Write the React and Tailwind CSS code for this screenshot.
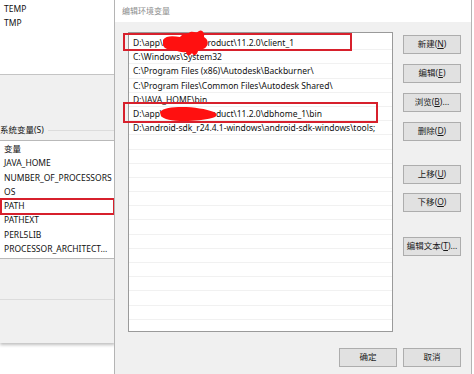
import React from 'react'

const userVars = ['TEMP', 'TMP']
const sysVars = ['变量', 'JAVA_HOME', 'NUMBER_OF_PROCESSORS', 'OS', 'PATH', 'PATHEXT', 'PERL5LIB', 'PROCESSOR_ARCHITECT...']
const paths = [
  'D:\\app\\xxxxxxxx\\product\\11.2.0\\client_1',
  'C:\\Windows\\System32',
  'C:\\Program Files (x86)\\Autodesk\\Backburner\\',
  'C:\\Program Files\\Common Files\\Autodesk Shared\\',
  'D:\\JAVA_HOME\\bin',
  'D:\\app\\xxxxxxxx\\product\\11.2.0\\dbhome_1\\bin',
  'D:\\android-sdk_r24.4.1-windows\\android-sdk-windows\\tools;',
]

function Btn({ label, u, rest }) {
  return (
    <div className="h-[19px] w-[58px] bg-[#e1e1e1] border border-[#adadad] flex items-center justify-center text-[8.5px] text-[#1a1a1a] leading-none">
      {label}
      {u !== undefined && (
        <span>
          (<span className="underline">{u}</span>){rest}
        </span>
      )}
    </div>
  )
}

function LeftWindow() {
  return (
    <div className="absolute left-0 top-0 w-[115px] h-[343px] flex flex-col bg-[#f0f0f0] shadow-[0_2px_3px_rgba(0,0,0,0.25)]">
      <div className="h-[75px] bg-white border-b border-[#c4c4c4] pt-[2px] pl-[4px]">
        {userVars.map(v => (
          <div key={v} className="h-[14px] leading-[14px]">{v}</div>
        ))}
      </div>
      <div className="h-[45px]" />
      <div className="h-[20px] flex items-center">
        <span className="whitespace-nowrap">系统变量(S)</span>
        <div className="flex-1 h-px bg-[#dcdcdc] ml-1" />
      </div>
      <div className="h-[119px] bg-white border-y border-[#b9b9b9] pl-[4px] pt-[1px]">
        {sysVars.map(v => (
          <div key={v} className="relative h-[14.3px] leading-[14.3px] whitespace-nowrap">
            {v}
            {v === 'PATH' && (
              <span className="absolute -left-[4px] right-0 -top-[1px] -bottom-[2px] border-2 border-[#d7202c]" />
            )}
          </div>
        ))}
      </div>
      <div className="h-[41px] border-b border-[#dcdcdc]" />
      <div className="flex-1" />
    </div>
  )
}

function Dialog() {
  const rows = Array.from({ length: 22 }, (_, i) => paths[i] || '')
  return (
    <div className="absolute left-[114px] top-0 w-[358px] h-[380px] flex flex-col bg-[#f0f0f0] border-x border-[#b4b4b4]">
      <div className="h-[22px] bg-white flex items-center pl-[7px] text-[8px] text-[#8c8c8c]">编辑环境变量</div>
      <div className="flex gap-[10px] pl-[13px] pt-[10px]">
        <div className="w-[265px] h-[300px] bg-white border border-[#9a9a9a] pt-[3px] overflow-hidden">
          {rows.map((p, i) => (
            <div key={i} className="h-[14.2px] leading-[14px] pl-[4px] border-b border-[#f1f1f1] whitespace-nowrap">{p}</div>
          ))}
        </div>
        <div className="flex flex-col pt-[3px]">
          <Btn label="新建" u="N" />
          <div className="h-[10px]" />
          <Btn label="编辑" u="E" />
          <div className="h-[10px]" />
          <Btn label="浏览" u="B" rest="..." />
          <div className="h-[10px]" />
          <Btn label="删除" u="D" />
          <div className="h-[24px]" />
          <Btn label="上移" u="U" />
          <div className="h-[9px]" />
          <Btn label="下移" u="O" />
          <div className="h-[25px]" />
          <Btn label="编辑文本" u="T" rest="..." />
        </div>
      </div>
      <div className="flex justify-end gap-[6px] pr-[10px] pt-[16px]">
        <Btn label="确定" />
        <Btn label="取消" />
      </div>
    </div>
  )
}

function Marks() {
  return (
    <>
      <div className="absolute left-[123px] top-[33px] w-[229px] h-[18px] border-2 border-[#d7202c]" />
      <div className="absolute left-[123px] top-[102px] w-[255px] h-[21px] border-2 border-[#d7202c]" />
      <svg className="absolute left-0 top-0" width="474" height="374" viewBox="0 0 474 374">
        <path
          d="M163 40 C166 35 174 36 180 37 C183 33 186 35 189 33 C192 30 196 34 199 31 C202 29 205 33 204 37 C208 39 209 44 206 47 C204 50 200 49 198 51 C197 55 194 57 192 53 C190 56 187 57 186 52 C182 53 178 51 174 50 C169 50 164 49 163 45 Z"
          fill="#ff1010"
        />
        <path
          d="M160 112 C163 108 172 107 182 107 C194 107 206 109 214 112 C218 114 217 117 212 118 C204 120 196 121 184 121 C172 121 163 119 161 116 Z"
          fill="#ff1010"
        />
      </svg>
    </>
  )
}

export default function App() {
  return (
    <div className="relative w-[474px] h-[374px] overflow-hidden bg-white text-[8.5px] text-[#111] font-['Noto_Sans','Noto_Sans_CJK_SC',sans-serif]">
      <LeftWindow />
      <Dialog />
      <Marks />
    </div>
  )
}
